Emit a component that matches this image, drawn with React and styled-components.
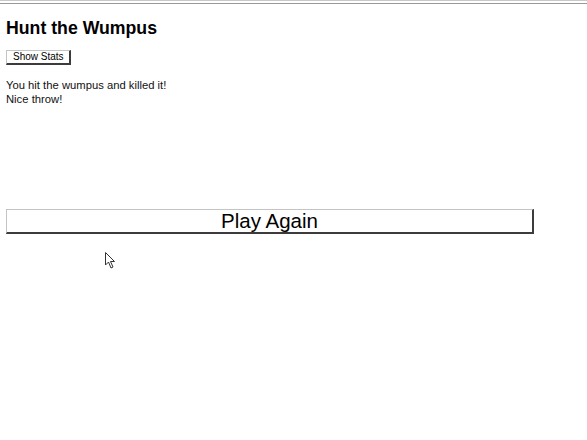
import React from 'react';
import styled, { createGlobalStyle } from 'styled-components';

const GlobalStyle = createGlobalStyle`
  html, body {
    margin: 0;
    padding: 0;
    background: #fff;
  }
  body {
    font-family: "Liberation Sans", Arial, sans-serif;
    color: #000;
  }
`;

const Page = styled.div`
  position: relative;
  min-height: 440px;
`;

const TopRule = styled.div`
  height: 1px;
  border-top: 1px solid #c8c8c8;
  border-bottom: 1px solid #9a9a9a;
  padding-top: 1px;
`;

const Content = styled.div`
  padding: 0 6px;
`;

const Title = styled.h1`
  margin: 13px 0 0;
  font-size: 17.7px;
  font-weight: bold;
  line-height: 22px;
`;

const BevelButton = styled.button`
  display: block;
  box-sizing: border-box;
  width: ${({ $block }) => ($block ? '528px' : 'auto')};
  height: ${({ $block }) => ($block ? '25px' : '15px')};
  margin-top: ${({ $block }) => ($block ? '103px' : '11px')};
  padding: ${({ $block }) => ($block ? '0' : '0 5px 0 6px')};
  font-family: "Liberation Sans", Arial, sans-serif;
  font-size: ${({ $block }) => ($block ? '20.5px' : '10px')};
  line-height: 1;
  color: #000;
  background: #fff;
  border-style: solid;
  border-width: 1px 2px 2px 1px;
  border-color: #c4c4c4 #3c3c3c #3c3c3c #c4c4c4;
  border-radius: 0;
  cursor: default;
`;

const Message = styled.p`
  margin: 13px 0 0;
  font-size: 11.25px;
  line-height: 14px;
  color: #111;
`;

const Pointer = styled.svg`
  position: absolute;
  left: 105px;
  top: 252px;
`;

export default function App() {
  return (
    <>
      <GlobalStyle />
      <Page>
        <TopRule />
        <Content>
          <Title>Hunt the Wumpus</Title>
          <BevelButton>Show Stats</BevelButton>
          <Message>
            You hit the wumpus and killed it!
            <br />
            Nice throw!
          </Message>
          <BevelButton $block>Play Again</BevelButton>
        </Content>
        <Pointer width="12" height="18" viewBox="0 0 12 18">
          <path
            d="M0.5 0.5 L0.5 13 L3.5 10 L6 16 L8 15 L5.5 9.5 L9.5 9.5 Z"
            fill="#fff"
            stroke="#333"
            strokeWidth="1"
          />
        </Pointer>
      </Page>
    </>
  );
}
